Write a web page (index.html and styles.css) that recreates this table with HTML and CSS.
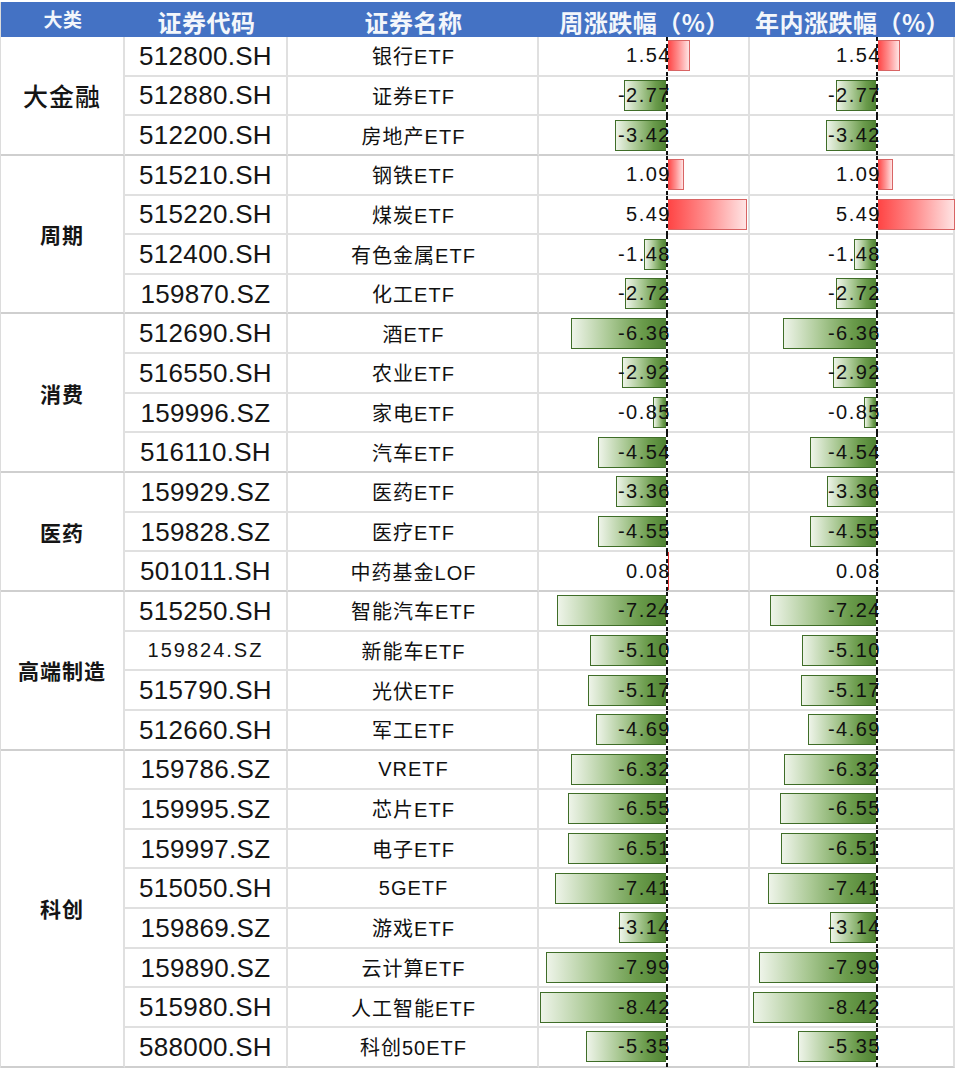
FILE: index.html
```html
<!DOCTYPE html>
<html lang="zh-CN">
<head>
<meta charset="utf-8">
<title>ETF 涨跌幅</title>
<link rel="stylesheet" href="styles.css">
</head>
<body>
<div class="sheet">
  <div class="hd hd-cat">大类</div>
  <div class="hd">证券代码</div>
  <div class="hd">证券名称</div>
  <div class="hd">周涨跌幅（%）</div>
  <div class="hd">年内涨跌幅（%）</div>

  <div class="cell cat cat-big span3">大金融</div>
  <div class="cell code">512800.SH</div><div class="cell name">银行ETF</div>
  <div class="cell chg"><span class="num">1.54</span><i class="axis"></i><div class="bar pos" style="width:22.2px"></div></div>
  <div class="cell chg c5"><span class="num">1.54</span><i class="axis"></i><div class="bar pos" style="width:21.6px"></div></div>
  <div class="cell code">512880.SH</div><div class="cell name">证券ETF</div>
  <div class="cell chg"><div class="bar neg" style="width:41.6px"></div><span class="num">-2.77</span><i class="axis"></i></div>
  <div class="cell chg c5"><div class="bar neg" style="width:40.4px"></div><span class="num">-2.77</span><i class="axis"></i></div>
  <div class="cell code end">512200.SH</div><div class="cell name end">房地产ETF</div>
  <div class="cell chg end"><div class="bar neg" style="width:51.3px"></div><span class="num">-3.42</span><i class="axis"></i></div>
  <div class="cell chg c5 end"><div class="bar neg" style="width:49.9px"></div><span class="num">-3.42</span><i class="axis"></i></div>

  <div class="cell cat span4">周期</div>
  <div class="cell code">515210.SH</div><div class="cell name">钢铁ETF</div>
  <div class="cell chg"><span class="num">1.09</span><i class="axis"></i><div class="bar pos" style="width:15.7px"></div></div>
  <div class="cell chg c5"><span class="num">1.09</span><i class="axis"></i><div class="bar pos" style="width:15.3px"></div></div>
  <div class="cell code">515220.SH</div><div class="cell name">煤炭ETF</div>
  <div class="cell chg"><span class="num">5.49</span><i class="axis"></i><div class="bar pos" style="width:79.1px"></div></div>
  <div class="cell chg c5"><span class="num">5.49</span><i class="axis"></i><div class="bar pos" style="width:76.9px"></div></div>
  <div class="cell code">512400.SH</div><div class="cell name">有色金属ETF</div>
  <div class="cell chg"><div class="bar neg" style="width:22.2px"></div><span class="num">-1.48</span><i class="axis"></i></div>
  <div class="cell chg c5"><div class="bar neg" style="width:21.6px"></div><span class="num">-1.48</span><i class="axis"></i></div>
  <div class="cell code end">159870.SZ</div><div class="cell name end">化工ETF</div>
  <div class="cell chg end"><div class="bar neg" style="width:40.8px"></div><span class="num">-2.72</span><i class="axis"></i></div>
  <div class="cell chg c5 end"><div class="bar neg" style="width:39.7px"></div><span class="num">-2.72</span><i class="axis"></i></div>

  <div class="cell cat span4">消费</div>
  <div class="cell code">512690.SH</div><div class="cell name">酒ETF</div>
  <div class="cell chg"><div class="bar neg" style="width:95.4px"></div><span class="num">-6.36</span><i class="axis"></i></div>
  <div class="cell chg c5"><div class="bar neg" style="width:92.9px"></div><span class="num">-6.36</span><i class="axis"></i></div>
  <div class="cell code">516550.SH</div><div class="cell name">农业ETF</div>
  <div class="cell chg"><div class="bar neg" style="width:43.8px"></div><span class="num">-2.92</span><i class="axis"></i></div>
  <div class="cell chg c5"><div class="bar neg" style="width:42.6px"></div><span class="num">-2.92</span><i class="axis"></i></div>
  <div class="cell code">159996.SZ</div><div class="cell name">家电ETF</div>
  <div class="cell chg"><div class="bar neg" style="width:12.8px"></div><span class="num">-0.85</span><i class="axis"></i></div>
  <div class="cell chg c5"><div class="bar neg" style="width:12.4px"></div><span class="num">-0.85</span><i class="axis"></i></div>
  <div class="cell code end">516110.SH</div><div class="cell name end">汽车ETF</div>
  <div class="cell chg end"><div class="bar neg" style="width:68.1px"></div><span class="num">-4.54</span><i class="axis"></i></div>
  <div class="cell chg c5 end"><div class="bar neg" style="width:66.3px"></div><span class="num">-4.54</span><i class="axis"></i></div>

  <div class="cell cat span3">医药</div>
  <div class="cell code">159929.SZ</div><div class="cell name">医药ETF</div>
  <div class="cell chg"><div class="bar neg" style="width:50.4px"></div><span class="num">-3.36</span><i class="axis"></i></div>
  <div class="cell chg c5"><div class="bar neg" style="width:49.1px"></div><span class="num">-3.36</span><i class="axis"></i></div>
  <div class="cell code">159828.SZ</div><div class="cell name">医疗ETF</div>
  <div class="cell chg"><div class="bar neg" style="width:68.3px"></div><span class="num">-4.55</span><i class="axis"></i></div>
  <div class="cell chg c5"><div class="bar neg" style="width:66.4px"></div><span class="num">-4.55</span><i class="axis"></i></div>
  <div class="cell code end">501011.SH</div><div class="cell name end">中药基金LOF</div>
  <div class="cell chg end"><span class="num">0.08</span><i class="axis"></i><div class="bar pos tiny" style="width:1.2px"></div></div>
  <div class="cell chg c5 end"><span class="num">0.08</span><i class="axis"></i></div>

  <div class="cell cat span4">高端制造</div>
  <div class="cell code">515250.SH</div><div class="cell name">智能汽车ETF</div>
  <div class="cell chg"><div class="bar neg" style="width:108.6px"></div><span class="num">-7.24</span><i class="axis"></i></div>
  <div class="cell chg c5"><div class="bar neg" style="width:105.7px"></div><span class="num">-7.24</span><i class="axis"></i></div>
  <div class="cell code code-small">159824.SZ</div><div class="cell name">新能车ETF</div>
  <div class="cell chg"><div class="bar neg" style="width:76.5px"></div><span class="num">-5.10</span><i class="axis"></i></div>
  <div class="cell chg c5"><div class="bar neg" style="width:74.5px"></div><span class="num">-5.10</span><i class="axis"></i></div>
  <div class="cell code">515790.SH</div><div class="cell name">光伏ETF</div>
  <div class="cell chg"><div class="bar neg" style="width:77.6px"></div><span class="num">-5.17</span><i class="axis"></i></div>
  <div class="cell chg c5"><div class="bar neg" style="width:75.5px"></div><span class="num">-5.17</span><i class="axis"></i></div>
  <div class="cell code end">512660.SH</div><div class="cell name end">军工ETF</div>
  <div class="cell chg end"><div class="bar neg" style="width:70.4px"></div><span class="num">-4.69</span><i class="axis"></i></div>
  <div class="cell chg c5 end"><div class="bar neg" style="width:68.5px"></div><span class="num">-4.69</span><i class="axis"></i></div>

  <div class="cell cat span8">科创</div>
  <div class="cell code">159786.SZ</div><div class="cell name">VRETF</div>
  <div class="cell chg"><div class="bar neg" style="width:94.8px"></div><span class="num">-6.32</span><i class="axis"></i></div>
  <div class="cell chg c5"><div class="bar neg" style="width:92.3px"></div><span class="num">-6.32</span><i class="axis"></i></div>
  <div class="cell code">159995.SZ</div><div class="cell name">芯片ETF</div>
  <div class="cell chg"><div class="bar neg" style="width:98.3px"></div><span class="num">-6.55</span><i class="axis"></i></div>
  <div class="cell chg c5"><div class="bar neg" style="width:95.6px"></div><span class="num">-6.55</span><i class="axis"></i></div>
  <div class="cell code">159997.SZ</div><div class="cell name">电子ETF</div>
  <div class="cell chg"><div class="bar neg" style="width:97.7px"></div><span class="num">-6.51</span><i class="axis"></i></div>
  <div class="cell chg c5"><div class="bar neg" style="width:95.0px"></div><span class="num">-6.51</span><i class="axis"></i></div>
  <div class="cell code">515050.SH</div><div class="cell name">5GETF</div>
  <div class="cell chg"><div class="bar neg" style="width:111.2px"></div><span class="num">-7.41</span><i class="axis"></i></div>
  <div class="cell chg c5"><div class="bar neg" style="width:108.2px"></div><span class="num">-7.41</span><i class="axis"></i></div>
  <div class="cell code">159869.SZ</div><div class="cell name">游戏ETF</div>
  <div class="cell chg"><div class="bar neg" style="width:47.1px"></div><span class="num">-3.14</span><i class="axis"></i></div>
  <div class="cell chg c5"><div class="bar neg" style="width:45.8px"></div><span class="num">-3.14</span><i class="axis"></i></div>
  <div class="cell code">159890.SZ</div><div class="cell name">云计算ETF</div>
  <div class="cell chg"><div class="bar neg" style="width:119.9px"></div><span class="num">-7.99</span><i class="axis"></i></div>
  <div class="cell chg c5"><div class="bar neg" style="width:116.7px"></div><span class="num">-7.99</span><i class="axis"></i></div>
  <div class="cell code">515980.SH</div><div class="cell name">人工智能ETF</div>
  <div class="cell chg"><div class="bar neg" style="width:126.3px"></div><span class="num">-8.42</span><i class="axis"></i></div>
  <div class="cell chg c5"><div class="bar neg" style="width:122.9px"></div><span class="num">-8.42</span><i class="axis"></i></div>
  <div class="cell code end">588000.SH</div><div class="cell name end">科创50ETF</div>
  <div class="cell chg end"><div class="bar neg" style="width:80.3px"></div><span class="num">-5.35</span><i class="axis"></i></div>
  <div class="cell chg c5 end"><div class="bar neg" style="width:78.1px"></div><span class="num">-5.35</span><i class="axis"></i></div>
</div>
</body>
</html>
```

FILE: styles.css
```css
* { box-sizing: border-box; }

html, body {
  margin: 0;
  padding: 0;
  background: #ffffff;
}

body {
  font-family: "Liberation Sans", "Noto Sans CJK SC", sans-serif;
  color: #151515;
}

.sheet {
  display: grid;
  grid-template-columns: 124px 163px 251px 211px 205px;
  grid-template-rows: 35px repeat(26, 39.65px);
  width: 955px;
  margin-top: 2px;
  border-left: 1px solid #dcdcdc;
}

.hd {
  background: #4472c4;
  color: #f3f6fb;
  font-family: "Noto Sans CJK SC", sans-serif;
  font-weight: 700;
  font-size: 24px;
  display: flex;
  align-items: center;
  justify-content: center;
  padding-top: 4px;
  white-space: nowrap;
  letter-spacing: 0.5px;
}

.hd-cat {
  font-size: 19px;
  padding-top: 0;
  padding-bottom: 2px;
}

.cell {
  border-right: 2px solid #e0e0e0;
  border-bottom: 2px solid #e0e0e0;
  display: flex;
  align-items: center;
  justify-content: center;
  min-width: 0;
}

.cell.end { border-bottom-color: #cfcfcf; }

.cat {
  font-family: "Noto Sans CJK SC", sans-serif;
  font-weight: 700;
  font-size: 21px;
  border-bottom-color: #cfcfcf;
  letter-spacing: 1px;
}

.cat-big {
  font-size: 25px;
  font-weight: 500;
}

.span3 { grid-row: span 3; }
.span4 { grid-row: span 4; }
.span8 { grid-row: span 8; }

.code {
  font-size: 26px;
  letter-spacing: 0.3px;
  padding-top: 1px;
}

.code-small {
  font-size: 20px;
  letter-spacing: 2px;
}

.name {
  font-size: 20px;
  letter-spacing: 1px;
  padding-left: 2px;
  color: #111;
}

.chg {
  display: grid;
  grid-template-columns: 127px 2px 1fr;
  grid-template-rows: 100%;
  align-items: center;
  justify-content: stretch;
}

.chg.c5 { grid-template-columns: 126px 2px 1fr; }

.num {
  grid-column: 1 / 3;
  grid-row: 1;
  justify-self: end;
  margin-right: -3px;
  font-size: 20px;
  letter-spacing: 1.5px;
  position: relative;
  z-index: 2;
  color: #111;
}

.axis {
  grid-column: 2;
  grid-row: 1;
  align-self: stretch;
  margin-bottom: -2px;
  background: repeating-linear-gradient(to bottom, #111 0 4px, transparent 4px 7px);
  position: relative;
  z-index: 3;
}

.bar {
  grid-row: 1;
  height: 31px;
}

.bar.neg {
  grid-column: 1;
  justify-self: end;
  border: 1px solid #3f6d28;
  border-right: none;
  background: linear-gradient(to right, #eef4e9 0%, #a9c893 40%, #6a9b4b 75%, #4e8232 100%);
}

.bar.pos {
  grid-column: 3;
  justify-self: start;
  border: 1px solid #d86464;
  border-left: none;
  background: linear-gradient(to right, #ff4444 0%, #ff8f8f 50%, #ffe4e4 100%);
}

.bar.tiny {
  border: none;
  background: #e03030;
  height: 38px;
}
```
